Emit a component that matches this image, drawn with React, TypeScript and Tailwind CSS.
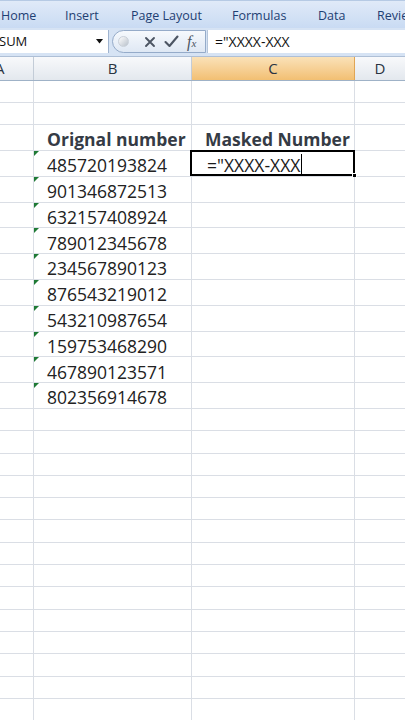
import React from "react";

const cellFont = { fontFamily: '"Open Sans", "Noto Sans", sans-serif' } as React.CSSProperties;
const uiFont = { fontFamily: '"Open Sans", "Noto Sans", sans-serif' } as React.CSSProperties;

const numbers = [
  "485720193824",
  "901346872513",
  "632157408924",
  "789012345678",
  "234567890123",
  "876543219012",
  "543210987654",
  "159753468290",
  "467890123571",
  "802356914678",
];

function GreenTri() {
  return (
    <svg className="absolute left-0 top-0" width="5" height="5" viewBox="0 0 5 5">
      <polygon points="0,0 5,0 0,5" fill="#1f7a35" />
    </svg>
  );
}

function Row({
  h,
  b,
  c,
  bold,
  tri,
  active,
}: {
  h: string;
  b?: string;
  c?: string;
  bold?: boolean;
  tri?: boolean;
  active?: boolean;
}) {
  return (
    <div className={`flex ${h}`}>
      <div className="w-[34px] shrink-0 border-r border-b border-[#dadee5]" />
      <div
        className={`relative w-[158px] shrink-0 border-r border-b border-[#dadee5] flex items-center pl-[13px] pt-[4px] text-[17.5px] ${
          bold ? "font-bold text-[#353b45]" : "text-[#222222]"
        }`}
        style={cellFont}
      >
        {tri && <GreenTri />}
        {b}
      </div>
      <div
        className={`relative w-[163px] shrink-0 border-r border-b border-[#dadee5] flex items-center pl-[13px] pt-[4px] text-[17.5px] ${
          bold ? "font-bold text-[#353b45]" : "text-[#222222]"
        }`}
        style={cellFont}
      >
        {c}
        {active && (
          <>
            <div className="absolute left-[-2px] right-[-1px] top-[-1px] bottom-[0px] border-2 border-black" />
            <div className="absolute right-[-3px] bottom-[-2px] w-[5px] h-[5px] bg-black border border-white" />
            <div className="flex items-center ml-[2px] text-[17.5px] text-[#1a1a1a]">
              <span>="XXXX-XXX</span>
              <span className="ml-[1px] w-[1px] h-[22px] bg-black" />
            </div>
          </>
        )}
      </div>
      <div className="flex-1 border-b border-[#dadee5]" />
    </div>
  );
}

export default function App() {
  const tail = Array.from({ length: 15 });
  return (
    <div className="w-[405px] h-[720px] overflow-hidden bg-white">
      {/* Ribbon tabs */}
      <div
        className="h-[28px] flex items-center pt-[4px] bg-gradient-to-b from-[#e0eaf8] to-[#c9dbf3] border-t border-[#b6cae4] text-[12.5px] text-[#1e3f73]"
        style={uiFont}
      >
        <span className="w-[65px] pl-[1px] shrink-0">Home</span>
        <span className="w-[66px] shrink-0">Insert</span>
        <span className="w-[101px] shrink-0">Page Layout</span>
        <span className="w-[86px] shrink-0">Formulas</span>
        <span className="w-[59px] shrink-0">Data</span>
        <span className="shrink-0">Review</span>
      </div>

      {/* Formula bar */}
      <div className="h-[29px] flex items-stretch bg-[#d6e3f4] pt-[2px] pb-[3px] border-b border-[#aebfd6]">
        <div
          className="w-[109px] shrink-0 bg-white flex items-center justify-between pr-[5px] border-r border-[#9fb3cf] text-[13px] text-[#111]"
          style={uiFont}
        >
          <span className="ml-[-1px]">SUM</span>
          <svg width="7" height="5" viewBox="0 0 7 5">
            <polygon points="0,0 7,0 3.5,4.5" fill="#111" />
          </svg>
        </div>
        <div className="w-[3px] shrink-0" />
        <div className="w-[94px] shrink-0 flex items-center rounded-l-full border border-[#95abc9] bg-gradient-to-b from-[#f6f9fd] to-[#dfe8f4]">
          <div className="ml-[5px] w-[11px] h-[11px] rounded-full bg-gradient-to-br from-[#ffffff] to-[#b9c1cb] border border-[#c9d0d9]" />
          <svg className="ml-[15px]" width="12" height="12" viewBox="0 0 12 12">
            <path d="M2 2 L10 10 M10 2 L2 10" stroke="#4c5563" strokeWidth="1.9" strokeLinecap="round" />
          </svg>
          <svg className="ml-[8px]" width="15" height="13" viewBox="0 0 15 13">
            <path d="M1.5 7 L5.5 11 L13.5 1.5" stroke="#4c5563" strokeWidth="2.1" fill="none" strokeLinecap="round" strokeLinejoin="round" />
          </svg>
          <span
            className="ml-[8px] italic text-[16px] text-[#4c5563] leading-none"
            style={{ fontFamily: '"Liberation Serif", "DejaVu Serif", serif' }}
          >
            f<span className="text-[11px]">x</span>
          </span>
        </div>
        <div className="flex-1 bg-white border-l border-[#b5c5da] ml-[1px] flex items-center pl-[7px] text-[14px] text-[#111]" style={uiFont}>
          ="XXXX-XXX
        </div>
      </div>

      {/* Column headers */}
      <div className="h-[24px] flex text-[15px] text-[#2a3442] border-b border-[#9fb2c7]" style={uiFont}>
        <div className="w-[34px] shrink-0 flex items-center pl-0 bg-gradient-to-b from-[#f8f9fb] to-[#e3e8ee] border-r border-[#c3ccd7]">
          <span className="ml-[-5px]">A</span>
        </div>
        <div className="w-[158px] shrink-0 flex items-center justify-center bg-gradient-to-b from-[#f8f9fb] to-[#e3e8ee] border-r border-[#c3ccd7]">
          B
        </div>
        <div className="w-[163px] shrink-0 flex items-center justify-center bg-gradient-to-b from-[#fae2b8] to-[#f2bf72] border-r border-[#e0a555]">
          C
        </div>
        <div className="flex-1 flex items-center justify-center bg-gradient-to-b from-[#f8f9fb] to-[#e3e8ee]">
          D
        </div>
      </div>

      {/* Grid */}
      <Row h="h-[22px]" />
      <Row h="h-[22px]" />
      <Row h="h-[26px]" b="Orignal number" c="Masked Number" bold />
      {numbers.map((n, i) => (
        <Row key={n} h="h-[25.8px]" b={n} tri active={i === 0} />
      ))}
      {tail.map((_, i) => (
        <Row key={i} h="h-[22.3px]" />
      ))}
    </div>
  );
}
